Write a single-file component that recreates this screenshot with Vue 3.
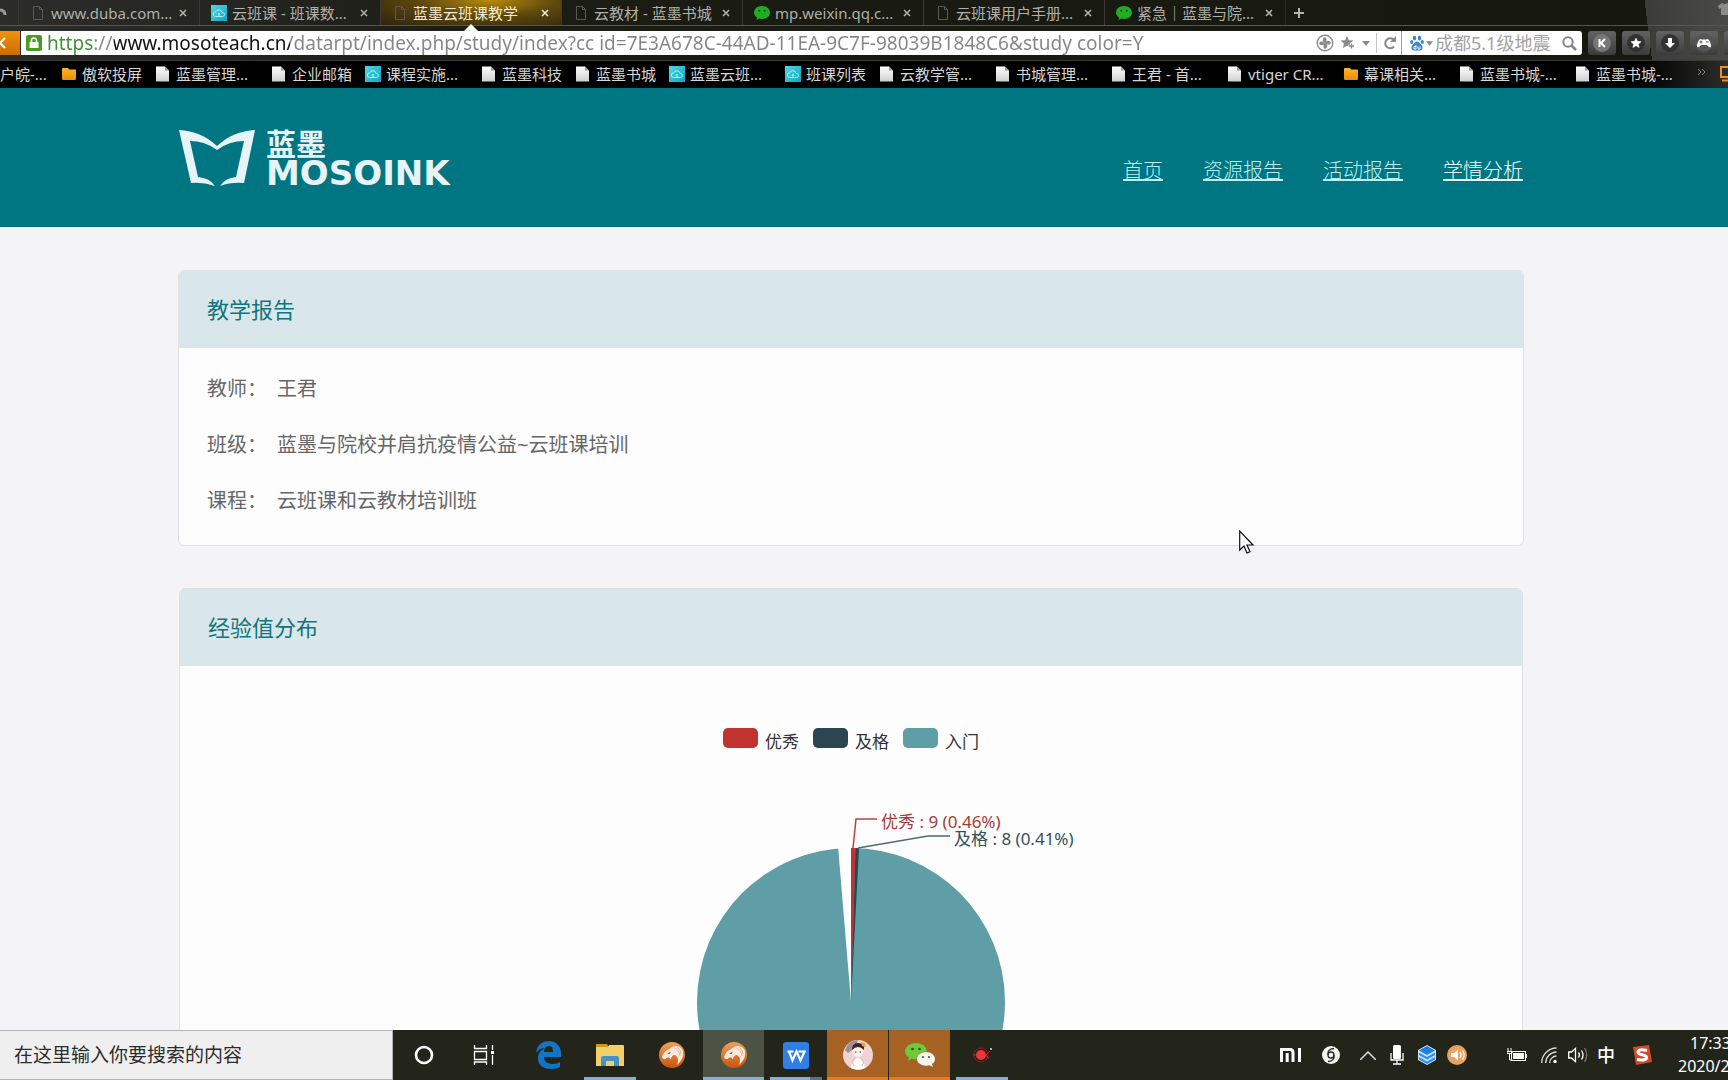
<script setup>
import { ref } from 'vue'

const tabs = [
  { title: 'www.duba.com...', icon: 'doc' },
  { title: '云班课 - 班课数...', icon: 'cloud' },
  { title: '蓝墨云班课教学', icon: 'doc', active: true },
  { title: '云教材 - 蓝墨书城', icon: 'doc' },
  { title: 'mp.weixin.qq.c...', icon: 'wechat' },
  { title: '云班课用户手册...', icon: 'doc' },
  { title: '紧急｜蓝墨与院...', icon: 'wechat' },
]

const bookmarks = [
  { title: '傲软投屏', icon: 'folder' },
  { title: '蓝墨管理...', icon: 'page', long: true },
  { title: '企业邮箱', icon: 'page' },
  { title: '课程实施...', icon: 'cloud', long: true },
  { title: '蓝墨科技', icon: 'page' },
  { title: '蓝墨书城', icon: 'page' },
  { title: '蓝墨云班...', icon: 'cloud', long: true },
  { title: '班课列表', icon: 'cloud' },
  { title: '云教学管...', icon: 'page', long: true },
  { title: '书城管理...', icon: 'page', long: true },
  { title: '王君 - 首...', icon: 'page', long: true },
  { title: 'vtiger CR...', icon: 'page', long: true },
  { title: '幕课相关...', icon: 'folder', long: true },
  { title: '蓝墨书城-...', icon: 'page', long: true },
  { title: '蓝墨书城-...', icon: 'page', long: true },
]

const url = ref('https://www.mosoteach.cn/datarpt/index.php/study/index?cc id=7E3A678C-44AD-11EA-9C7F-98039B1848C6&study color=Y')
const keyword = ref('')
const search = ref('')

const nav = [
  { title: '首页' },
  { title: '资源报告' },
  { title: '活动报告' },
  { title: '学情分析', active: true },
]

const info = [
  { label: '教师：', value: '王君' },
  { label: '班级：', value: '蓝墨与院校并肩抗疫情公益~云班课培训' },
  { label: '课程：', value: '云班课和云教材培训班' },
]

const legend = [
  { name: '优秀', color: '#c0332e' },
  { name: '及格', color: '#2c4551' },
  { name: '入门', color: '#5f9ea7' },
]
</script>

<template>
  <div class="desktop">
    <svg class="defs" aria-hidden="true">
      <defs>
        <linearGradient id="cyan" x1="0" y1="0" x2="1" y2="1">
          <stop offset="0" stop-color="#4fd8e4" /><stop offset="1" stop-color="#12a5c0" />
        </linearGradient>
        <linearGradient id="paper" x1="0" y1="0" x2="0" y2="1">
          <stop offset="0" stop-color="#ffffff" /><stop offset="1" stop-color="#cfcfcf" />
        </linearGradient>
        <linearGradient id="gold" x1="0" y1="0" x2="0" y2="1">
          <stop offset="0" stop-color="#ffb52e" /><stop offset="1" stop-color="#e88c08" />
        </linearGradient>
        <linearGradient id="ember" x1="0" y1="0" x2="0" y2="1">
          <stop offset="0" stop-color="#f0a05c" /><stop offset="1" stop-color="#c8540c" />
        </linearGradient>
        <symbol id="i-doc" viewBox="0 0 16 16">
          <path d="M3.5 1.500h6l3 3v10h-9z M9.500 1.500v3h3" fill="none" stroke="#5a5a52" />
        </symbol>
        <symbol id="i-page" viewBox="0 0 16 16">
          <path d="M1 0.500h9l4 4v11h-13z" fill="url(#paper)" />
          <path d="M10 0.500v4h4z" fill="#9a9a9a" />
        </symbol>
        <symbol id="i-folder" viewBox="0 0 16 16">
          <path d="M1 3q0-1 1-1h5l1 1.500h6q1 0 1 1V13q0 1-1 1H2q-1 0-1-1z" fill="url(#gold)" />
        </symbol>
        <symbol id="i-cloud" viewBox="0 0 16 16">
          <rect width="16" height="16" fill="url(#cyan)" />
          <path d="M4.500 11.500a2.300 2.300 0 0 1 .2-4.600a3.400 3.400 0 0 1 6.500.6a2 2 0 0 1 .5 4z M8 11V8.500M6.700 9.500L8 8.300l1.300 1.200" fill="none" stroke="#bdf3f7" stroke-width=".9" />
        </symbol>
        <symbol id="i-wechat" viewBox="0 0 16 16">
          <path d="M8 1c4.400 0 8 2.800 8 6.500S12.400 14 8 14c-1 0-2-.2-2.800-.5L2.500 15l.6-2.500C1.200 11.300 0 9.500 0 7.500C0 3.800 3.600 1 8 1z" fill="#1fae1f" />
          <circle cx="5.300" cy="5.800" r="1" fill="#0c4a0c" /><circle cx="10.700" cy="5.800" r="1" fill="#0c4a0c" />
        </symbol>
        <symbol id="i-cheetah" viewBox="0 0 28 28">
          <circle cx="14" cy="14" r="13" fill="url(#ember)" />
          <path d="M4 16C5 12 8 9 12 7.500C15 4 21 4 24 8C27 13 24 20 19 24C21 19 20 15.500 17 14C14.500 14 13.500 16 12.500 18.500C11.500 16 10 15.500 8.500 17C7.500 19 5 18.500 4 16z" fill="#fbe9dc" />
          <path d="M9 12.500l4-1.800l-1.500 2.300z" fill="#9a4512" />
          <path d="M16 7q5 1 6 8M19 6q4 3 4 7" fill="none" stroke="#e9b793" />
        </symbol>
      </defs>
    </svg>

    <header class="browser">
      <div class="tabs">
        <button class="back-tab" aria-label="恢复">
          <svg width="8" height="16" viewBox="0 0 8 16"><path d="M0 5q5 0 5 5" fill="none" stroke="#9a9a94" stroke-width="3" /></svg>
        </button>
        <div v-for="tab in tabs" :key="tab.title" class="tab" :class="{ active: tab.active }">
          <svg class="ico"><use :href="'#i-' + tab.icon" /></svg>
          <button class="tab-title">{{ tab.title }}</button>
          <button class="close" aria-label="关闭">
            <svg width="8" height="8" viewBox="0 0 8 8"><path d="M1 1l6 6M7 1L1 7" stroke="currentColor" stroke-width="1.600" /></svg>
          </button>
        </div>
        <button class="plus" aria-label="新标签">
          <svg width="10" height="10" viewBox="0 0 10 10"><path d="M5 0v10M0 5h10" stroke="#b4b4ae" stroke-width="2" /></svg>
        </button>
        <svg class="skin" width="10" height="14" viewBox="0 0 10 14"><path d="M0 4l4-3q3 2 6 0v12H3V6L1 7z" fill="#8c8c88" /></svg>
      </div>

      <div class="address">
        <button class="back" aria-label="后退">
          <svg width="20" height="24" viewBox="0 0 20 24"><path d="M5 7L0 12l5 5" fill="none" stroke="#fff" stroke-width="2" /></svg>
        </button>
        <div class="field">
          <svg class="lock" width="16" height="16" viewBox="0 0 16 16">
            <rect width="16" height="16" rx="2" fill="#4b9a24" />
            <path d="M5.500 7V5.500a2.500 2.500 0 0 1 5 0V7" fill="none" stroke="#fff" stroke-width="1.600" />
            <rect x="3.500" y="7" width="9" height="6" fill="#fff" />
          </svg>
          <input v-model="url" class="url" type="text" aria-label="地址" spellcheck="false">
          <div class="tools">
            <svg width="18" height="18" viewBox="0 0 18 18"><circle cx="9" cy="9" r="7.800" fill="none" stroke="#8a8a8a" stroke-width="1.400" /><g fill="#8a8a8a"><path id="blade" d="M9 9C6 8 6 4 9 3C11 4 11 7 9 9z" /><use href="#blade" transform="rotate(90 9 9)" /><use href="#blade" transform="rotate(180 9 9)" /><use href="#blade" transform="rotate(270 9 9)" /></g></svg>
            <svg width="16" height="16" viewBox="0 0 16 16"><path d="M7 1l1.800 4.200l4.700.4l-3.600 3l1 4.500L7 10.700l-4 2.400l1-4.500l-3.600-3l4.700-.4z" fill="#8a8a8a" /><path d="M11.500 8v6M8.500 11h6" stroke="#fff" stroke-width="3" /><path d="M11.500 8.500v5M9 11h5" stroke="#8a8a8a" stroke-width="1.500" /></svg>
            <svg width="8" height="5" viewBox="0 0 8 5"><path d="M0 0h8L4 5z" fill="#8a8a8a" /></svg>
            <i class="bar"></i>
            <svg width="14" height="16" viewBox="0 0 14 16"><path d="M11 11.500A5 5 0 1 1 10.500 4.500" fill="none" stroke="#8a8a8a" stroke-width="2" /><path d="M13 1v6H7z" fill="#8a8a8a" /></svg>
          </div>
          <label class="find">
            <svg width="14" height="16" viewBox="0 0 14 16" fill="#3a86cf"><ellipse cx="4.500" cy="3" rx="1.700" ry="2.500" /><ellipse cx="9.500" cy="3" rx="1.700" ry="2.500" /><ellipse cx="1.700" cy="7" rx="1.600" ry="2" /><ellipse cx="12.300" cy="7" rx="1.600" ry="2" /><path d="M7 6.500c2 0 3 2 4.500 3.500c2 2 1 5.500-1.500 5.500H4C1.500 15.500.5 12 2.500 10C4 8.500 5 6.500 7 6.500z" /><path d="M6 10v4H4v-2.500h2M8 11.500V14h2v-2.500" fill="none" stroke="#fff" stroke-width=".9" /></svg>
            <svg width="7" height="5" viewBox="0 0 8 5"><path d="M0 0h8L4 5z" fill="#8a8a8a" /></svg>
            <input v-model="keyword" type="text" placeholder="成都5.1级地震" aria-label="搜索">
            <svg width="15" height="15" viewBox="0 0 15 15"><circle cx="6" cy="6" r="4.700" fill="none" stroke="#858585" stroke-width="2" /><path d="M9.500 9.500l4.500 4.500" stroke="#858585" stroke-width="2.600" /></svg>
          </label>
        </div>
        <div class="ext">
          <button aria-label="K"><svg width="18" height="18" viewBox="0 0 18 18"><circle cx="9" cy="9" r="9" fill="#777" /><path d="M6.500 5v8M12 5L8 9l4 4" fill="none" stroke="#fff" stroke-width="2" /></svg></button>
          <button aria-label="收藏"><svg width="18" height="18" viewBox="0 0 18 18"><circle cx="9" cy="9" r="9" fill="#333" /><path d="M9 3.500l1.600 3.600l4 .4l-3 2.700l.9 3.900L9 12.100l-3.500 2l.9-3.900l-3-2.700l4-.4z" fill="#fff" /></svg></button>
          <button aria-label="下载"><svg width="18" height="18" viewBox="0 0 18 18"><circle cx="9" cy="9" r="9" fill="#333" /><path d="M7 4h4v5h3l-5 5l-5-5h3z" fill="#fff" /></svg></button>
          <button aria-label="游戏"><svg width="18" height="18" viewBox="0 0 18 18"><circle cx="9" cy="9" r="9" fill="#555" /><path d="M5 5q4 1 8 0q3 3 3 8q-2 1-4-2H6q-2 3-4 2q0-5 3-8z" fill="#fff" /><path d="M6 6.500v3M4.500 8h3M11 8h2.500" stroke="#555" /></svg></button>
          <button aria-label="更多"></button>
        </div>
      </div>

      <nav class="bookmarks">
        <a class="first" href="#">户皖-...</a>
        <a v-for="(mark, i) in bookmarks" :key="i" href="#" :class="{ long: mark.long }">
          <svg class="ico"><use :href="'#i-' + mark.icon" /></svg>{{ mark.title }}
        </a>
        <button class="overflow" aria-label="更多书签">
          <svg width="9" height="6" viewBox="0 0 9 6"><path d="M1 0l3 3l-3 3M5 0l3 3l-3 3" fill="none" stroke="#8a8a86" /></svg>
        </button>
        <svg class="side" width="8" height="16" viewBox="0 0 8 16"><path d="M8 1H1v10h7M2 14.500h6" fill="none" stroke="#f08a1c" stroke-width="2" /></svg>
      </nav>
    </header>

    <main class="page">
      <div class="banner">
        <a class="logo" href="#" aria-label="蓝墨 MOSOINK">
          <svg width="76" height="56" viewBox="0 0 76 56">
            <path fill-rule="evenodd" fill="#e6f3f7" d="M0 0Q22 1 38 16Q54 1 76 0L65 53Q52 52 41 56Q46 48 57 47L65 11Q50 11 38 20Q26 11 11 11L19 47Q31 48 36 56Q24 52 12 53z" />
          </svg>
          <span class="brand">
            <span class="brand-cn">蓝墨</span>
            <span class="brand-en">MOSOINK</span>
          </span>
        </a>
        <nav class="menu">
          <a v-for="item in nav" :key="item.title" href="#" :class="{ active: item.active }">{{ item.title }}</a>
        </nav>
      </div>

      <div class="content">
        <section class="card report">
          <h2>教学报告</h2>
          <dl>
            <div v-for="row in info" :key="row.label">
              <dt>{{ row.label }}</dt>
              <dd>{{ row.value }}</dd>
            </div>
          </dl>
        </section>

        <section class="card chart">
          <h2>经验值分布</h2>
          <ul class="legend">
            <li v-for="item in legend" :key="item.name">
              <i :style="{ background: item.color }"></i>{{ item.name }}
            </li>
          </ul>
          <svg class="pie" width="462" height="370" viewBox="0 0 462 370">
            <circle cx="231" cy="212" r="154" fill="#5f9ea7" />
            <path d="M231 212L218 56H231z" fill="#fdfdfd" />
            <path d="M231 212V58H235.500z" fill="#c0332e" />
            <path d="M231 212L235.500 58L239 58.200z" fill="#2c4551" />
            <path d="M233 58L236 29H257" fill="none" stroke="#b9423f" stroke-width="1.500" />
            <path d="M238 58L308 46H330" fill="none" stroke="#52677a" stroke-width="1.500" />
            <text x="261" y="38" fill="#a83a38">优秀 : 9 (0.46%)</text>
            <text x="334" y="55" fill="#33505c">及格 : 8 (0.41%)</text>
          </svg>
        </section>
      </div>
    </main>

    <footer class="taskbar">
      <input v-model="search" class="search" type="text" placeholder="在这里输入你要搜索的内容" aria-label="搜索">
      <div class="apps">
        <button aria-label="Cortana"><svg width="20" height="20" viewBox="0 0 20 20"><circle cx="10" cy="10" r="8" fill="none" stroke="#fff" stroke-width="2.600" /></svg></button>
        <button class="view" aria-label="任务视图"><svg width="22" height="20" viewBox="0 0 22 20"><path d="M1.500 0v3.500h12V0M1.500 6.500h12v8h-12zM1.500 20v-3h12v3M19.500 0v5M19.500 10v10" fill="none" stroke="#fff" stroke-width="1.300" /><rect x="18" y="6" width="3" height="3" fill="#fff" /></svg></button>
        <button aria-label="Edge"><svg width="26" height="28" viewBox="0 0 26 28"><path d="M1 12C2 4 7 0 14 0c8 0 12 6 12 13v3H9c0 5 4 7 9 7c3 0 5-1 7-2v5c-2 1-5 2-9 2C8 28 3 24 3 17c0-5 3-8 7-10C6 7 3 9 1 12zM9 11h9c0-4-1-6-4-6s-5 3-5 6z" fill="#1174c4" /></svg></button>
        <button class="open" aria-label="文件"><svg width="28" height="24" viewBox="0 0 28 24"><path d="M0 1h11l2 3H0z" fill="#c99a1c" /><path d="M0 4h12l1-2h14q1 0 1 1v20H0z" fill="#f3d067" /><path d="M5 23v-8q0-2 2-2h14q2 0 2 2v8h-5v-5h-8v5z" fill="#4791c4" /></svg></button>
        <button aria-label="猎豹"><svg width="28" height="28"><use href="#i-cheetah" /></svg></button>
        <button class="current" aria-label="猎豹窗口"><svg width="28" height="28"><use href="#i-cheetah" /></svg></button>
        <button class="open grouped" aria-label="WPS"><svg width="26" height="27" viewBox="0 0 26 27"><rect width="26" height="27" rx="3" fill="#2f7fe6" /><path d="M4.500 9.500h6M6 9.500l3.500 9l4-9l4 9l4-9h-6" fill="none" stroke="#fff" stroke-width="2.200" /></svg></button>
        <button class="alert" aria-label="联系人"><svg width="30" height="30" viewBox="0 0 30 30"><circle cx="15" cy="15" r="15" fill="#f1d3d3" /><path d="M2 10Q6 0 15 0l-3 8l-7 5z" fill="#9a8f94" /><ellipse cx="15" cy="11" rx="5.500" ry="6" fill="#fff1ea" /><path d="M9 10q0-7 6-7q7 0 6 7q-3-3-6-3t-6 3z" fill="#3a2622" /><path d="M18 2l4 1l1 4l-4-1z" fill="#f0a92a" /><path d="M12 12h1.500M16.500 12h1.500" stroke="#533" /><path d="M8 28q1-9 7-10q6 1 7 10q-7 3-14 0z" fill="#fff" /><path d="M12 18q-4 4-1 8M18 18q4 4 1 8" fill="none" stroke="#dcb8b8" /></svg></button>
        <button class="alert" aria-label="微信"><svg width="30" height="26" viewBox="0 0 30 26"><path d="M11 1c6 0 11 3.700 11 8.600c-6 0-10 3-10 7.400c-2 .5-4 .2-5.500-.4L3 19l1-3.500C1.500 14 0 12 0 9.600C0 4.700 5 1 11 1z" fill="#6fc73a" /><path d="M21 10c5 0 9 3 9 7c0 2-1 4-3 5l1 3l-3.500-1.800c-6 1.600-12.500-1.200-12.500-6.200c0-4 4-7 9-7z" fill="#f4f4f2" /><g fill="#30501c"><circle cx="7.500" cy="7" r="1.300" /><circle cx="14.500" cy="7" r="1.300" /><circle cx="18" cy="15" r="1" /><circle cx="24" cy="15" r="1" /></g></svg></button>
        <button class="open" aria-label="录制"><svg width="22" height="18" viewBox="0 0 22 18"><circle cx="10" cy="9" r="7" fill="none" stroke="#8e1c1c" /><circle cx="10" cy="9" r="5" fill="#f0343a" /><path d="M2 9h3M15 9l4-4M15 9l3 4" stroke="#c22" /><circle cx="20" cy="3" r="1" fill="#ddd" /></svg></button>
      </div>
      <div class="tray">
        <svg width="22" height="14" viewBox="0 0 22 14"><path d="M1.500 14V1.500H10q3 0 3 3V14M7.200 5v9M19.500 0v14" fill="none" stroke="#fff" stroke-width="3" /></svg>
        <svg class="g1" width="18" height="18" viewBox="0 0 18 18"><circle cx="9" cy="9" r="9" fill="#f2f2f2" /><circle cx="9" cy="9" r="3" fill="none" stroke="#23251b" stroke-width="1.300" /><path d="M6 9Q5 3 12 2.500M12 9q1 6-6 6.500" fill="none" stroke="#23251b" stroke-width="1.300" /></svg>
        <svg class="g1" width="16" height="9" viewBox="0 0 16 9"><path d="M0 9l8-8l8 8" fill="none" stroke="#ddd" stroke-width="1.500" /></svg>
        <svg class="g2" width="14" height="20" viewBox="0 0 14 20"><rect x="3" width="8" height="14" rx="1.500" fill="#fff" /><path d="M1 8v7h12V8M7 15v4M3 19h8" fill="none" stroke="#fff" stroke-width="1.300" /></svg>
        <svg class="g2" width="18" height="20" viewBox="0 0 18 20"><path d="M9 0l9 5v10l-9 5l-9-5V5z" fill="#c9e4fb" /><path d="M9 1l8 4.500L9 10L1 5.500z" fill="#1e7ee0" /><path d="M1 7.500l8 4.500L17 7.500v2.500l-8 4.500L1 10zM1 12l8 4.500L17 12v2.500L9 19l-8-4.500z" fill="#2a8df0" /></svg>
        <svg class="g3" width="20" height="20" viewBox="0 0 20 20"><circle cx="10" cy="10" r="10" fill="#e9a160" /><path d="M4 8h3l4-3.500v11L7 12H4z" fill="#fff" /><path d="M13 7q2 3 0 6M15.500 5.500q3 4.500 0 9" fill="none" stroke="#fff" stroke-width="1.300" /></svg>
        <svg class="g4" width="20" height="14" viewBox="0 0 20 14"><rect x="4.500" y="3.500" width="14" height="9" fill="none" stroke="#fff" /><rect x="6" y="5" width="11" height="6" fill="#fff" /><path d="M19.500 6v4M1 0v3M4 0v3M0 3.500h5v2H0zM2.500 5v7H5" fill="none" stroke="#fff" /></svg>
        <svg class="g2" width="16" height="16" viewBox="0 0 16 16"><path d="M.7 16A15 15 0 0 1 15.500 1M4.700 16A11 11 0 0 1 15.500 5M8.700 16A7 7 0 0 1 15.500 9" fill="none" stroke="#d8d8d4" stroke-width="1.300" /><circle cx="14" cy="14.500" r="1.700" fill="#fff" /></svg>
        <svg class="g3" width="20" height="16" viewBox="0 0 20 16"><path d="M.7 5h2.800L7.500 1.500v13L3.500 11H.7z" fill="none" stroke="#fff" stroke-width="1.300" /><path d="M10.500 5.500q2 2.500 0 5M13.500 3.500q3 4.500 0 9" fill="none" stroke="#fff" stroke-width="1.300" /><path d="M16.500 1q4.500 7 0 14" fill="none" stroke="#77786f" stroke-width="1.300" /></svg>
        <span class="ime">中</span>
        <svg class="sogou" width="20" height="20" viewBox="0 0 20 20"><path d="M1 2l16-2l3 17l-16 3z" fill="#d04b2c" /><path d="M15 5.500Q6 3.500 6 7.200C6 10.500 14.500 9 14.500 12.500Q14.500 16 5 14.500" fill="none" stroke="#fff" stroke-width="3" /></svg>
        <div class="clock"><span>17:33</span><span>2020/2</span></div>
      </div>
    </footer>

    <svg class="cursor" width="16" height="24" viewBox="0 0 16 24"><path d="M.7 1v19l4.300-4l3 7l3-1.300l-3-6.700h6z" fill="#fff" stroke="#111" stroke-width="1.200" /></svg>
  </div>
</template>

<style>
body {
  overflow: hidden;
}
</style>

<style scoped>
.desktop {
  position: relative;
  display: flex;
  flex-direction: column;
  height: 100vh;
  overflow: hidden;
  font-family: "Noto Sans", "Noto Sans CJK SC", sans-serif;
  background: #f4f4f6;
}
button {
  display: flex;
  align-items: center;
  justify-content: center;
  padding: 0;
  border: 0;
  background: none;
  color: inherit;
  font: inherit;
}
input {
  min-width: 0;
  padding: 0;
  border: 0;
  outline: 0;
  background: none;
  font: inherit;
}
svg {
  display: block;
  flex: none;
}
.defs {
  position: absolute;
  width: 0;
  height: 0;
}
.ico {
  width: 16px;
  height: 16px;
}

/* browser chrome */
.browser {
  flex: none;
  background:
    linear-gradient(83deg, transparent 12%, #3c3d38 12%, #4a4b47) right / 84px 100% no-repeat,
    linear-gradient(90deg, #2c2c29, #1b1c14 30%, #16170f);
}
.tabs {
  display: flex;
  height: 25px;
  border-bottom: 1px solid #55564e;
  color: #b0b0aa;
  font-size: 15px;
}
.back-tab {
  width: 18px;
  justify-content: flex-start;
}
.tab {
  display: flex;
  align-items: center;
  width: 181px;
  box-sizing: border-box;
  padding: 0 12px 0 11px;
  border-left: 1px solid #3a3b34;
}
.tab.active {
  position: relative;
  color: #f3ead2;
  background: radial-gradient(ellipse at 60% 0, #b98a10, #5f480c 45%, #2c240e 100%);
}
.tab.active::after {
  content: "";
  position: absolute;
  left: 50%;
  top: 24px;
  margin-left: -7px;
  border: 7px solid transparent;
  border-top: 0;
  border-bottom-color: #fff;
}
.tab-title {
  flex: 1;
  justify-content: flex-start;
  margin-left: 5px;
  line-height: 24px;
  white-space: nowrap;
}
.plus {
  width: 26px;
  border-left: 1px solid #2b2c24;
}
.skin {
  margin: 2px 0 0 auto;
}
.address {
  display: flex;
  align-items: center;
  height: 34px;
  border-bottom: 1px solid #3a3b36;
  overflow: hidden;
}
.back {
  width: 20px;
  height: 24px;
  margin-right: 1px;
  background: linear-gradient(#f0940c, #cc6a06);
}
.field {
  display: flex;
  flex: 1;
  align-items: center;
  height: 24px;
  min-width: 0;
  padding: 0 5px;
  border-radius: 0 3px 3px 0;
  background: #fff;
}
.lock {
  margin-right: 5px;
}
.url {
  flex: 1;
  height: 24px;
  font-size: 19px;
  color: transparent;
  background: linear-gradient(90deg, #3d8f35 47px, #8a8a8a 47px 67px, #111 67px 243px, #858585 243px);
  -webkit-background-clip: text;
  background-clip: text;
}
.tools {
  display: flex;
  align-items: center;
  gap: 6px;
  height: 24px;
  padding-right: 4px;
  border-right: 1px solid #9a9a9a;
}
.bar {
  width: 1px;
  height: 20px;
  background: #c4c4c4;
}
.find {
  display: flex;
  align-items: center;
  gap: 2px;
  padding-left: 8px;
}
.find input {
  width: 125px;
  height: 24px;
  font-size: 18px;
}
.find input::placeholder {
  color: #a2a2a2;
  opacity: 1;
}
.ext {
  display: flex;
  gap: 6px;
  width: 140px;
  margin-left: 6px;
  overflow: hidden;
}
.ext button {
  flex: none;
  width: 28px;
  height: 24px;
  border-radius: 3px;
  background: linear-gradient(#636363, #3c3c3c);
}
.bookmarks {
  display: flex;
  align-items: center;
  height: 27px;
  box-sizing: border-box;
  padding-bottom: 2px;
  background: linear-gradient(90deg, #000 1640px, #2c2c2a);
  font-size: 15px;
  overflow: hidden;
}
.bookmarks a {
  display: flex;
  flex: none;
  align-items: center;
  gap: 5px;
  width: 94px;
  color: #d6d6d6;
  text-decoration: none;
  line-height: 24px;
  white-space: nowrap;
}
.bookmarks a.long {
  width: 116px;
}
.bookmarks a.first {
  width: 61px;
}
.overflow {
  margin-left: 6px;
  align-self: flex-start;
  padding-top: 8px;
}
.side {
  margin-left: auto;
}

/* web page */
.page {
  flex: 1;
  min-height: 0;
  overflow: hidden;
}
.banner {
  display: flex;
  justify-content: space-between;
  height: 139px;
  box-sizing: border-box;
  padding: 42px 205px 0 179px;
  background: #007683;
}
.logo {
  display: flex;
  gap: 11px;
  height: 56px;
  color: #e6f3f7;
  text-decoration: none;
}
.brand {
  display: flex;
  flex-direction: column;
  font-weight: 700;
}
.brand-cn {
  font-size: 30px;
  line-height: 28px;
}
.brand-en {
  font-family: "DejaVu Sans", sans-serif;
  font-size: 34px;
  line-height: 30px;
}
.menu {
  display: flex;
  gap: 40px;
  padding-top: 25px;
}
.menu a {
  color: #bdeff2;
  font-size: 20px;
  line-height: 30px;
  font-weight: 300;
  font-family: "Noto Sans CJK SC", sans-serif;
}
.menu a.active {
  color: #f0ffff;
}
.content {
  padding: 43px 204px 0 178px;
}
.card {
  box-sizing: border-box;
  border: 1px solid #dfe1e4;
  border-radius: 6px;
  background: #fdfdfd;
  overflow: hidden;
}
.card h2 {
  margin: 0;
  padding: 0 28px;
  background: #dae7ea;
  color: #12747e;
  font-size: 22px;
  font-weight: 400;
  line-height: 77px;
}
.report dl {
  margin: 0;
  padding: 13px 28px 16px;
  color: #666;
  font-size: 20px;
  line-height: 56px;
}
.report dl div {
  display: flex;
  gap: 10px;
}
.report dd {
  margin: 0;
}
.chart {
  margin: 42px 1px 0;
}
.legend {
  display: flex;
  justify-content: center;
  gap: 14px;
  margin: 0;
  padding: 62px 0 0;
  list-style: none;
  color: #333;
  font-size: 17px;
  line-height: 28px;
}
.legend li {
  display: flex;
  gap: 7px;
}
.legend i {
  width: 35px;
  height: 20px;
  border-radius: 5px;
}
.pie {
  margin: 34px auto 0;
  font-size: 17px;
}

/* task bar */
.taskbar {
  display: flex;
  flex: none;
  height: 50px;
  background: #23251b;
  color: #fff;
}
.search {
  box-sizing: border-box;
  width: 393px;
  padding-left: 14px;
  border: 1px solid #b4b4b8;
  border-left: 0;
  background: #efefef;
  font-size: 19px;
}
.search::placeholder {
  color: #2c2c2c;
  opacity: 1;
}
.apps {
  display: flex;
}
.apps button {
  position: relative;
  width: 62px;
}
.apps .view {
  padding-right: 4px;
}
.apps button::after {
  position: absolute;
  left: 5px;
  right: 5px;
  bottom: 0;
  height: 3px;
}
.apps .open::after {
  content: "";
  background: #86aedd;
}
.apps .grouped::after {
  background: linear-gradient(90deg, #86aedd 40px, #56708f 40px);
}
.apps .current {
  background: #4c5344;
  border-right: 1px solid #23251b;
}
.apps .current::after {
  content: "";
  left: 0;
  right: 0;
  background: #86aedd;
}
.apps .alert {
  border-right: 1px solid #23251b;
  background: #a66222;
}
.apps .alert::after {
  content: "";
  left: 0;
  right: 0;
  background: #ee7718;
}
.tray {
  display: flex;
  align-items: center;
  margin-left: auto;
}
.g1 {
  margin-left: 20px;
}
.g2 {
  margin-left: 14px;
}
.g3 {
  margin-left: 11px;
}
.g4 {
  margin-left: 40px;
}
.ime {
  margin-left: 9px;
  font-size: 18px;
  font-weight: 500;
  line-height: 24px;
}
.sogou {
  margin-left: 17px;
}
.clock {
  display: flex;
  flex-direction: column;
  width: 50px;
  margin-left: 26px;
  overflow: hidden;
  font-size: 16px;
  line-height: 23px;
  white-space: nowrap;
}
.clock span:first-child {
  padding-left: 12px;
}
.cursor {
  position: absolute;
  left: 1239px;
  top: 530px;
}
</style>
